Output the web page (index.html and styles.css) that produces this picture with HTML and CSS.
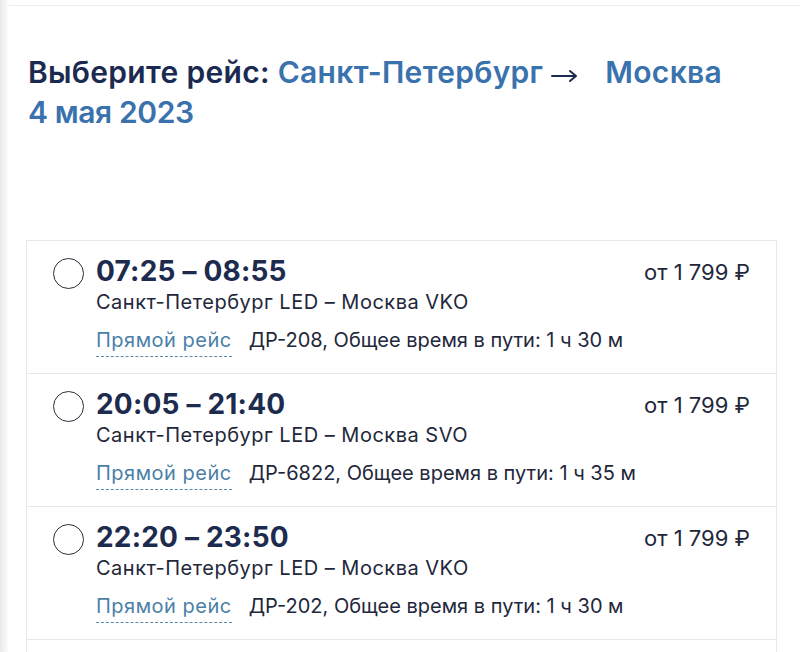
FILE: index.html
```html
<!DOCTYPE html>
<html lang="ru">
<head>
<meta charset="utf-8">
<link rel="stylesheet" href="styles.css">
</head>
<body>
<div class="page">
  <h1 class="title"><span class="dark">Выберите рейс:</span> Санкт-Петербург<svg class="arrow" width="28" height="14" viewBox="0 0 28 14"><path d="M1 7H25M19 2L25 7L19 12" fill="none" stroke="#1b2a50" stroke-width="2" stroke-linecap="round" stroke-linejoin="round"/></svg>Москва<br><span class="date">4 мая 2023</span></h1>
  <div class="list">
    <div class="row">
      <span class="radio"></span>
      <div class="info">
        <div class="time">07:25 – 08:55</div>
        <div class="route">Санкт-Петербург LED – Москва VKO</div>
        <div class="meta"><span class="link">Прямой рейс</span><span class="desc">ДР-208, Общее время в пути: 1 ч 30 м</span></div>
      </div>
      <div class="price">от 1 799 ₽</div>
    </div>
    <div class="row">
      <span class="radio"></span>
      <div class="info">
        <div class="time">20:05 – 21:40</div>
        <div class="route">Санкт-Петербург LED – Москва SVO</div>
        <div class="meta"><span class="link">Прямой рейс</span><span class="desc">ДР-6822, Общее время в пути: 1 ч 35 м</span></div>
      </div>
      <div class="price">от 1 799 ₽</div>
    </div>
    <div class="row">
      <span class="radio"></span>
      <div class="info">
        <div class="time">22:20 – 23:50</div>
        <div class="route">Санкт-Петербург LED – Москва VKO</div>
        <div class="meta"><span class="link">Прямой рейс</span><span class="desc">ДР-202, Общее время в пути: 1 ч 30 м</span></div>
      </div>
      <div class="price">от 1 799 ₽</div>
    </div>
    <div class="row row-empty"></div>
  </div>
</div>
</body>
</html>
```
FILE: styles.css
```css
html, body {
  margin: 0;
  padding: 0;
  height: 100%;
}
body {
  background: linear-gradient(to right, #e9e9e9 0px, #f6f6f6 6px, #ffffff 9px);
  font-family: "Inter", "Noto Sans", sans-serif;
  overflow: hidden;
}
.page {
  margin-top: 5px;
  margin-left: 9px;
  background: #fff;
  border-top: 1px solid #ececec;
  height: calc(100% - 5px);
  padding: 46px 0 0 19px;
  box-sizing: border-box;
  overflow: hidden;
}
.title {
  margin: 0;
  font-size: 30px;
  line-height: 40px;
  font-weight: 600;
  color: #3a72ad;
  letter-spacing: 0.3px;
  white-space: nowrap;
}
.title .dark {
  color: #1b2a50;
}
.title .arrow {
  display: inline-block;
  vertical-align: baseline;
  margin: 0 26px 0 8px;
}
.title .date {
  letter-spacing: -0.4px;
}
.list {
  margin-top: 108px;
  margin-left: -2px;
  width: 749px;
  border: 1px solid #e8e8e8;
  border-bottom: none;
}
.row {
  height: 132px;
  border-bottom: 1px solid #e8e8e8;
  display: flex;
  align-items: flex-start;
}
.row-empty {
  height: 20px;
}
.radio {
  flex: none;
  width: 29px;
  height: 29px;
  border: 1.6px solid #2a2f3a;
  border-radius: 50%;
  margin: 17px 12px 0 26px;
}
.info {
  flex: 1;
  min-width: 0;
  padding-top: 12px;
  white-space: nowrap;
}
.time {
  font-size: 28px;
  line-height: 36px;
  font-weight: 700;
  color: #1c2b4e;
  letter-spacing: 0.2px;
}
.route {
  font-size: 20px;
  line-height: 26px;
  color: #22273a;
  letter-spacing: 0.5px;
}
.meta {
  margin-top: 12px;
  font-size: 20px;
  line-height: 26px;
  color: #22273a;
  display: flex;
  gap: 17px;
}
.link {
  color: #4a7fa8;
  border-bottom: 1px dashed #5a8ab0;
  padding-bottom: 3px;
  letter-spacing: 0.5px;
}
.desc {
  letter-spacing: 0;
}
.price {
  flex: none;
  padding-top: 16px;
  margin-right: 26px;
  font-size: 22px;
  line-height: 30px;
  color: #22273a;
}
```
